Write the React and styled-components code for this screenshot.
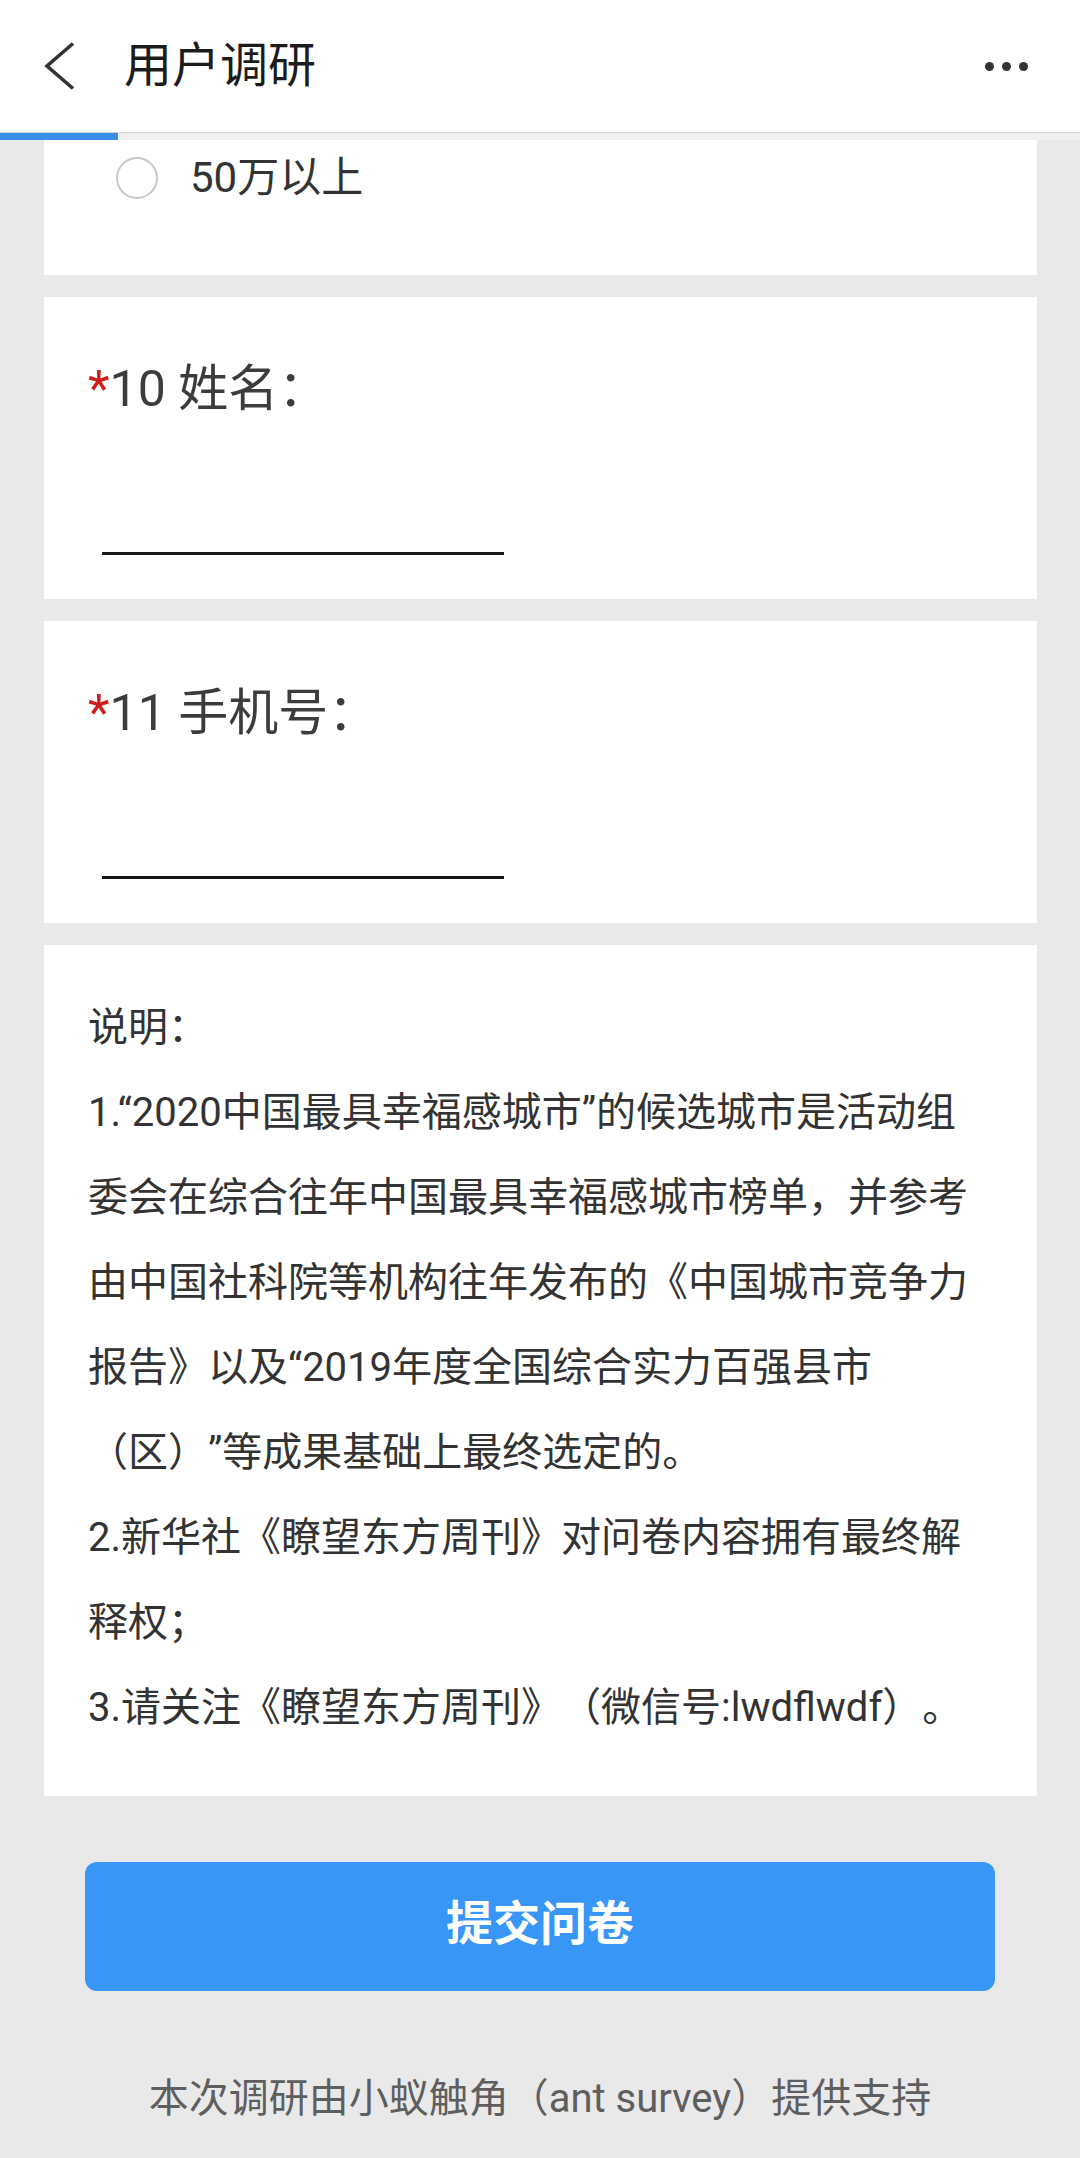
import React from "react";
import styled, { createGlobalStyle } from "styled-components";

const GlobalStyle = createGlobalStyle`
  html, body {
    margin: 0;
    padding: 0;
    background: #e9e9e9;
    font-family: Roboto, "Noto Sans CJK SC", "Noto Sans", sans-serif;
    color: #333;
    text-spacing-trim: space-all;
  }
  * { box-sizing: border-box; }
`;

const Page = styled.div`
  width: 1080px;
  min-height: 2158px;
  background: #e9e9e9;
  display: flex;
  flex-direction: column;
`;

const Header = styled.header`
  height: 133px;
  background: #ffffff;
  border-bottom: 1px solid #d8d8d8;
  display: flex;
  align-items: center;
  padding: 0 52px 0 44px;
`;

const BackButton = styled.span`
  display: flex;
  width: 34px;
  height: 48px;
  align-items: center;
`;

const Title = styled.h1`
  margin: 0 0 0 46px;
  font-size: 48px;
  font-weight: 400;
  color: #1c1c1c;
  line-height: 1;
  flex: 1;
`;

const Dots = styled.span`
  display: flex;
  gap: 8px;
  align-items: center;
`;

const Dot = styled.span`
  width: 9px;
  height: 9px;
  border-radius: 50%;
  background: #333;
`;

const ProgressTrack = styled.div`
  height: 7px;
  background: #f0f0f0;
`;

const ProgressFill = styled.div`
  height: 100%;
  background: #3a8ee6;
`;

const Content = styled.main`
  display: flex;
  flex-direction: column;
  gap: 22px;
  padding: 0 43px 0 44px;
`;

const Card = styled.section`
  background: #ffffff;
  padding: ${(p) => p.$pad};
`;

const OptionRow = styled.label`
  display: flex;
  align-items: center;
  gap: 32px;
  margin-left: 72px;
  height: 42px;
`;

const Radio = styled.span`
  width: 42px;
  height: 42px;
  border-radius: 50%;
  border: 2px solid #c8c8c8;
  background: #fff;
  flex-shrink: 0;
`;

const OptionText = styled.span`
  font-size: 42px;
  color: #333;
  line-height: 1;
`;

const Label = styled.div`
  font-size: 50px;
  line-height: 60px;
  color: #3c3c3c;
  white-space: nowrap;
`;

const Required = styled.span`
  color: #d11c1c;
`;

const InputLine = styled.div`
  margin: 133px 0 0 14px;
  width: 402px;
  height: 3px;
  background: #151515;
`;

const Para = styled.p`
  margin: 0;
  font-size: 40px;
  line-height: 85px;
  color: #333;
  white-space: nowrap;
`;

const SubmitButton = styled.button`
  margin: 66px 85px 0;
  height: 129px;
  border: none;
  border-radius: 12px;
  background: #3796f6;
  color: #ffffff;
  font-family: inherit;
  font-size: 47px;
  font-weight: 700;
  padding: 0 0 14px;
  cursor: pointer;
`;

const Footer = styled.footer`
  margin-top: 80px;
  text-align: center;
  font-size: 40px;
  line-height: 56px;
  color: #5e5e5e;
`;

function QuestionCard({ no, title }) {
  return (
    <Card $pad="62px 44px 44px">
      <Label>
        <Required>*</Required>
        {no} {title}：
      </Label>
      <InputLine />
    </Card>
  );
}

export default function App() {
  const progress = 118;
  return (
    <Page>
      <GlobalStyle />
      <Header>
        <BackButton>
          <svg width="34" height="48" viewBox="0 0 34 48" fill="none">
            <path d="M29 1.5 L3 24 L29 46.5" stroke="#333" strokeWidth="3.6" strokeLinejoin="miter" />
          </svg>
        </BackButton>
        <Title>用户调研</Title>
        <Dots>
          <Dot />
          <Dot />
          <Dot />
        </Dots>
      </Header>
      <ProgressTrack>
        <ProgressFill style={{ width: progress }} />
      </ProgressTrack>
      <Content>
        <Card $pad="17px 0 76px">
          <OptionRow>
            <Radio />
            <OptionText>50万以上</OptionText>
          </OptionRow>
        </Card>
        <QuestionCard no="10" title="姓名" />
        <QuestionCard no="11" title="手机号" />
        <Card $pad="40px 44px 46px">
          <Para>说明：</Para>
          <Para>
            1.“2020中国最具幸福感城市”的候选城市是活动组
            <br />
            委会在综合往年中国最具幸福感城市榜单，并参考
            <br />
            由中国社科院等机构往年发布的《中国城市竞争力
            <br />
            报告》以及“2019年度全国综合实力百强县市
            <br />
            （区）”等成果基础上最终选定的。
          </Para>
          <Para>
            2.新华社《瞭望东方周刊》对问卷内容拥有最终解
            <br />
            释权；
          </Para>
          <Para>3.请关注《瞭望东方周刊》（微信号:lwdflwdf）。</Para>
        </Card>
      </Content>
      <SubmitButton>提交问卷</SubmitButton>
      <Footer>本次调研由小蚁触角（ant survey）提供支持</Footer>
    </Page>
  );
}
